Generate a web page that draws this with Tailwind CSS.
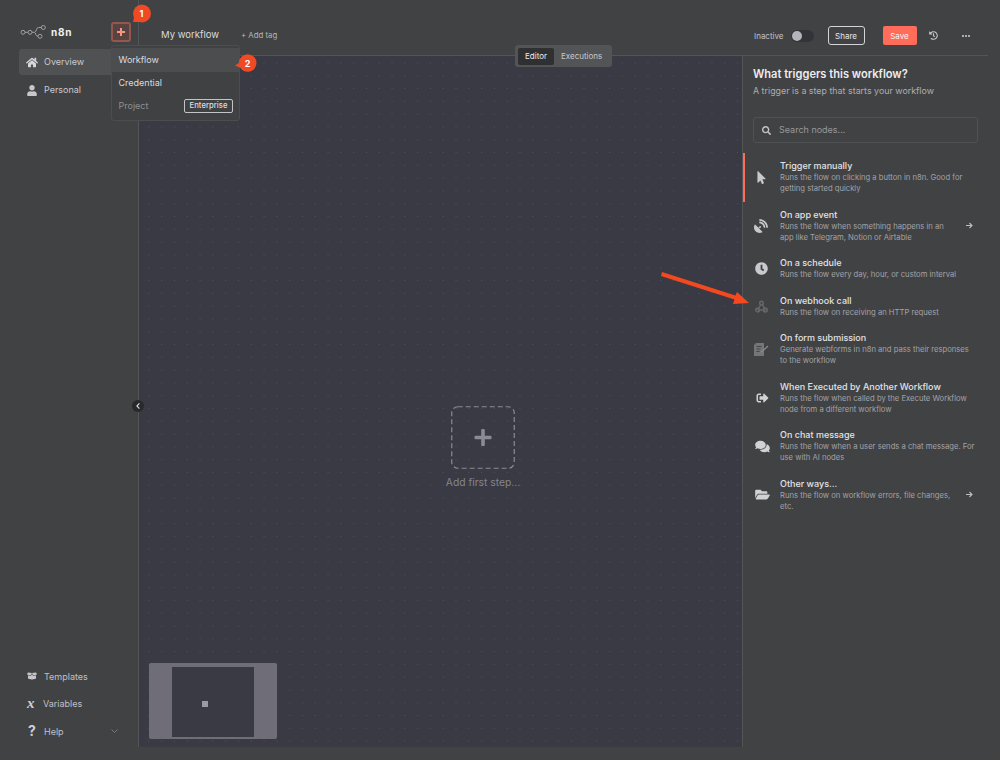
<!DOCTYPE html>
<html lang="en">
<head>
    <meta charset="UTF-8">
    <title>My workflow - n8n</title>
    <script src="https://cdn.jsdelivr.net/npm/@tailwindcss/browser@4"></script>
</head>
<body class="bg-[#414244] font-[Inter,sans-serif] overflow-hidden">
    <div class="relative w-[1000px] h-[760px] flex pb-[13px] pr-[12px] overflow-hidden">

        <!-- Sidebar -->
        <aside class="w-[139px] shrink-0 border-r border-[#535456] flex flex-col">
            <div class="h-[49px] pl-[20px] pt-[24px] flex items-start gap-[5px]">
                <svg class="w-[26px] h-[16px]" viewBox="0 0 26 16" fill="none" stroke="#a0a0a4" stroke-width="1">
                    <circle cx="3" cy="8.300" r="2"/><circle cx="10" cy="8.300" r="2"/><circle cx="20" cy="12.300" r="2"/><circle cx="23.300" cy="3.500" r="2"/>
                    <path d="M5 8.300h3M12 8.300h2.500M14.500 8.300c2 0 1.500-4.800 4-4.800h2.800M14.500 8.300c1.500 0 .5 4 3.500 4"/>
                </svg>
                <span class="text-[10px] leading-[16px] font-bold tracking-[0.8px] text-[#f0f0f0]">n8n</span>
            </div>
            <nav class="flex flex-col pl-[19px] text-[9px] text-[#c9c9cd]">
                <a class="h-[26px] bg-[#505153] rounded-l-[3px] flex items-center pl-[7px] gap-[6px]">
                    <svg class="w-[12px] h-[11px]" viewBox="0 0 576 512" fill="#d6d6da"><path d="M280.37 148.26L96 300.11V464a16 16 0 0 0 16 16l112.06-.29a16 16 0 0 0 15.92-16V368a16 16 0 0 1 16-16h64a16 16 0 0 1 16 16v95.64a16 16 0 0 0 16 16.05L464 480a16 16 0 0 0 16-16V300L295.67 148.26a12.19 12.19 0 0 0-15.3 0zM571.6 251.47L488 182.56V44.05a12 12 0 0 0-12-12h-56a12 12 0 0 0-12 12v72.61L318.47 43a48 48 0 0 0-61 0L4.34 251.47a12 12 0 0 0-1.6 16.9l25.5 31A12 12 0 0 0 45.15 301l235.22-193.74a12.19 12.19 0 0 1 15.3 0L530.9 301a12 12 0 0 0 16.9-1.6l25.5-31a12 12 0 0 0-1.7-16.93z"/></svg>
                    <span>Overview</span>
                </a>
                <a class="h-[28px] mt-[1px] flex items-center pl-[8px] gap-[7px]">
                    <svg class="w-[10px] h-[11px]" viewBox="0 0 448 512" fill="#c6c6cc"><path d="M224 256c70.7 0 128-57.3 128-128S294.7 0 224 0 96 57.3 96 128s57.3 128 128 128zm89.6 32h-16.7c-22.2 10.2-46.9 16-72.9 16s-50.6-5.8-72.9-16h-16.7C60.2 288 0 348.2 0 422.4V464c0 26.5 21.5 48 48 48h352c26.5 0 48-21.5 48-48v-41.6c0-74.2-60.2-134.4-134.4-134.4z"/></svg>
                    <span>Personal</span>
                </a>
            </nav>
            <nav class="mt-auto pb-[2px] flex flex-col pl-[27px] text-[9px] text-[#c0c0c4]">
                <a class="h-[27.5px] flex items-center gap-[7px]">
                    <svg class="w-[10px] h-[8px]" viewBox="0 0 640 512" fill="#c6c6cc"><path d="M425.7 256c-16.9 0-32.8-9-41.4-23.4L320 126l-64.2 106.6c-8.7 14.5-24.6 23.5-41.5 23.5-4.5 0-9-.6-13.3-1.9L64 215v178c0 14.7 10 27.5 24.2 31l216.2 54.1c10.2 2.5 20.9 2.5 31 0L551.8 424c14.2-3.6 24.2-16.4 24.2-31V215l-137 39.1c-4.3 1.3-8.8 1.9-13.3 1.9zm212.6-112.2L586.8 41c-3.1-6.2-9.8-9.8-16.7-8.9L320 64l91.7 152.1c3.8 6.3 11.4 9.3 18.5 7.3l197.9-56.5c9.9-2.9 14.7-13.9 10.2-23.1zM53.2 41L1.7 143.8c-4.6 9.2.3 20.2 10.1 23l197.9 56.5c7.1 2 14.7-1 18.5-7.3L320 64 69.8 32.1c-6.9-.8-13.5 2.7-16.6 8.9z"/></svg>
                    <span>Templates</span>
                </a>
                <a class="h-[27.5px] flex items-center gap-[6px]">
                    <span class="w-[10px] text-[15px] leading-none font-bold italic font-[Liberation_Serif,serif] text-[#d0d0d4]">x</span>
                    <span>Variables</span>
                </a>
                <a class="h-[27.5px] flex items-center gap-[7px]">
                    <span class="w-[10px] text-[14px] leading-none font-bold text-center text-[#d0d0d4]">?</span>
                    <span>Help</span>
                    <svg class="w-[7px] h-[4px] ml-[40px]" viewBox="0 0 7 4" fill="none" stroke="#85868a" stroke-width="0.8"><path d="M.5.5l3 3 3-3"/></svg>
                </a>
            </nav>
        </aside>

        <!-- Main column -->
        <div class="flex-1 flex flex-col min-w-0">
            <header class="h-[56px] shrink-0 border-b border-[#535456] flex items-center pl-[22px] pr-[18px] pt-[16px]">
                <span class="text-[9.5px] text-[#dcdcdf]">My workflow</span>
                <span class="ml-[22px] text-[7.8px] text-[#b6b6ba]">+ Add tag</span>
                <span class="ml-auto text-[8px] text-[#c0c0c4]">Inactive</span>
                <span class="ml-[7px] w-[23px] h-[12px] rounded-full bg-[#333437] flex items-center pl-[1px]"><span class="w-[10px] h-[10px] rounded-full bg-[#b4b4ba]"></span></span>
                <button class="ml-[14px] w-[37px] h-[19px] rounded-[3px] border border-[#d4d4d8] text-[8px] text-[#e6e6e8]">Share</button>
                <button class="ml-[18px] w-[34px] h-[19px] rounded-[2px] bg-[#ff6d5a] text-[8px] text-[#f4f4f4]">Save</button>
                <svg class="ml-[12.500px] w-[9px] h-[9px]" viewBox="0 0 512 512" fill="#c4c4c8"><path d="M504 255.531c.253 136.64-111.18 248.372-247.82 248.468-59.015.042-113.223-20.53-155.822-54.911-11.077-8.94-11.905-25.541-1.839-35.607l11.267-11.267c8.609-8.609 22.353-9.551 31.891-1.984C173.062 425.135 212.781 440 256 440c101.705 0 184-82.311 184-184 0-101.705-82.311-184-184-184-48.814 0-93.149 18.969-126.068 49.932l50.754 50.754c10.08 10.08 2.941 27.314-11.313 27.314H24c-8.837 0-16-7.163-16-16V38.627c0-14.254 17.234-21.393 27.314-11.314l49.372 49.372C129.209 34.136 189.552 8 256 8c136.81 0 247.747 110.78 248 247.531zm-180.912 78.784l9.823-12.63c8.138-10.463 6.253-25.542-4.21-33.679L288 256.349V152c0-13.255-10.745-24-24-24h-16c-13.255 0-24 10.745-24 24v135.651l65.409 50.874c10.463 8.137 25.541 6.253 33.679-4.21z"/></svg>
                <span class="ml-[24px] flex gap-[1px]"><i class="w-[2px] h-[2px] rounded-full bg-[#d0d0d4]"></i><i class="w-[2px] h-[2px] rounded-full bg-[#d0d0d4]"></i><i class="w-[2px] h-[2px] rounded-full bg-[#d0d0d4]"></i></span>
            </header>

            <div class="flex-1 flex min-h-0">
                <!-- Canvas -->
                <main class="relative flex-1 bg-[#393a43] bg-[radial-gradient(circle,#52535b_0.6px,transparent_0.8px)] bg-[size:12.8px_12.8px] bg-[position:3.5px_0.5px]">
                    <div class="absolute left-[312px] top-[350px] flex flex-col items-center w-[64px]">
                        <svg class="w-[64px] h-[63px]" viewBox="0 0 64 63" fill="none">
                            <rect x=".75" y=".75" width="62.500" height="61.500" rx="6" stroke="#8b8b95" stroke-width="1.200" stroke-dasharray="5 3"/>
                            <rect x="30.200" y="23" width="3.600" height="17" rx="1" fill="#8b8b95"/>
                            <rect x="23.500" y="29.700" width="17" height="3.600" rx="1" fill="#8b8b95"/>
                        </svg>
                        <span class="mt-[6px] whitespace-nowrap text-[10.3px] text-[#85858f]">Add first step...</span>
                    </div>
                    <div class="absolute left-[10px] bottom-[8px] w-[128px] h-[76px] rounded-[2px] bg-[#6f6e78] flex justify-center pt-[4px]">
                        <div class="w-[82px] h-[70px] bg-[#393a43] pl-[30px] pt-[34px]">
                            <span class="block w-[6px] h-[6px] bg-[#9a9aa2]"></span>
                        </div>
                    </div>
                </main>

                <!-- Trigger panel -->
                <section class="w-[246px] shrink-0 border-l border-[#535456]">
                    <div class="pl-[10px] pr-[10px] pt-[11px]">
                        <h2 class="text-[11.1px] leading-[14px] font-semibold text-[#ededf0]">What triggers this workflow?</h2>
                        <p class="mt-[3.500px] text-[8.9px] leading-[12px] text-[#aeaeb3]">A trigger is a step that starts your workflow</p>
                        <div class="mt-[20.500px] h-[26px] rounded-[3px] border border-[#505154] flex items-center pl-[8px] gap-[8px]">
                            <svg class="w-[9px] h-[9px]" viewBox="0 0 512 512" fill="#c4c4c8"><path d="M505 442.7L405.3 343c-4.5-4.5-10.6-7-17-7H372c27.6-35.3 44-79.7 44-128C416 93.1 322.9 0 208 0S0 93.1 0 208s93.1 208 208 208c48.3 0 92.7-16.4 128-44v16.3c0 6.4 2.5 12.5 7 17l99.7 99.7c9.4 9.4 24.6 9.4 33.9 0l28.3-28.3c9.4-9.4 9.4-24.6.1-34zM208 336c-70.7 0-128-57.2-128-128 0-70.7 57.2-128 128-128 70.7 0 128 57.2 128 128 0 70.7-57.2 128-128 128z"/></svg>
                            <span class="text-[9px] text-[#98989d]">Search nodes...</span>
                        </div>
                    </div>

                    <ul class="mt-[10px]">
                        <li class="border-l-2 border-[#ff6d5a] h-[48.5px] pl-[11.5px] pr-[8px] flex items-center">
                            <div class="w-[23.5px] shrink-0"><svg class="w-[9px] h-[13px]" viewBox="0 0 320 512" fill="#c8c8cd"><path d="M302.189 329.126H196.105l55.831 135.993c3.889 9.428-.555 19.999-9.444 23.999l-49.165 21.427c-9.165 4-19.443-.571-23.332-9.714l-53.053-129.136-86.664 89.138C18.729 472.71 0 463.554 0 447.977V18.299C0 1.899 19.921-6.096 30.277 5.443l284.412 292.542c11.472 11.179 3.007 31.141-12.5 31.141z"/></svg></div>
                            <div><h3 class="text-[9px] leading-[11px] font-medium text-[#e2e2e5]">Trigger manually</h3><p class="mt-[1px] text-[7.65px] leading-[11px] text-[#a2a2a7]">Runs the flow on clicking a button in n8n. Good for getting started quickly</p></div>
                        </li>
                        <li class="h-[48.5px] pl-[13.5px] pr-[15px] flex items-center">
                            <div class="w-[23.5px] shrink-0"><svg class="w-[14px] h-[14px] -ml-[2.5px]" viewBox="0 0 512 512" fill="#c8c8cd"><path d="M305.44954,462.59c7.39157,7.29792,6.18829,20.09661-3.00038,25.00356-77.713,41.80281-176.72559,29.9105-242.34331-35.7082C-5.49624,386.28227-17.404,287.362,24.41381,209.554c4.89125-9.095,17.68975-10.29834,25.00318-3.00043L166.22872,323.36708l27.39411-27.39452c-.68759-2.60974-1.594-5.00071-1.594-7.81361a32.00407,32.00407,0,1,1,32.00407,32.00455c-2.79723,0-5.20378-.89075-7.79786-1.594l-27.40974,27.41015ZM511.9758,303.06732a16.10336,16.10336,0,0,1-16.002,17.00242H463.86031a15.96956,15.96956,0,0,1-15.89265-14.70543C440.46671,175.5492,336.45348,70.53427,207.03078,63.948a16.09436,16.09436,0,0,1-15.00191-15.90852V16.02652A16.09389,16.09389,0,0,1,209.031.02425C372.25,8.61922,503.47,139.841,511.9758,303.06732Zm-96.01221-.29689a16.21093,16.21093,0,0,1-16.11142,17.29934H367.645a16.06862,16.06862,0,0,1-15.89265-14.00212c-6.90712-77.70094-68.29305-139.5-145.9219-146.18819a16.049,16.049,0,0,1-14.00223-15.89307V112.04878a16.167,16.167,0,0,1,17.29-16.10549C319.8728,103.22664,408.2718,191.6197,415.96359,302.77043Z"/></svg></div>
                            <div class="w-[172px] shrink-0"><h3 class="text-[9px] leading-[11px] font-medium text-[#e2e2e5]">On app event</h3><p class="mt-[1px] text-[7.65px] leading-[11px] text-[#a2a2a7]">Runs the flow when something happens in an app like Telegram, Notion or Airtable</p></div>
                            <svg class="w-[7px] h-[7px] ml-auto" viewBox="0 0 7 7" fill="none" stroke="#bdbdc2" stroke-width="1.100"><path d="M0 3.5h6M3.5 1l2.500 2.500L3.500 6"/></svg>
                        </li>
                        <li class="h-[37.5px] pl-[13.5px] pr-[8px] flex items-center">
                            <div class="w-[23.5px] shrink-0"><svg class="w-[13px] h-[13px] -ml-[1.5px]" viewBox="0 0 512 512" fill="#c8c8cd"><path d="M256 8C119 8 8 119 8 256s111 248 248 248 248-111 248-248S393 8 256 8zm57.1 350.1L224.9 294c-3.1-2.3-4.9-5.9-4.9-9.7V116c0-6.6 5.4-12 12-12h48c6.6 0 12 5.4 12 12v137.7l63.5 46.2c5.4 3.9 6.5 11.4 2.6 16.8l-28.2 38.8c-3.9 5.3-11.4 6.5-16.8 2.6z"/></svg></div>
                            <div><h3 class="text-[9px] leading-[11px] font-medium text-[#e2e2e5]">On a schedule</h3><p class="mt-[1px] text-[7.65px] leading-[11px] text-[#a2a2a7]">Runs the flow every day, hour, or custom interval</p></div>
                        </li>
                        <li class="h-[37.5px] pl-[13.5px] pr-[8px] flex items-center">
                            <div class="w-[23.5px] shrink-0"><svg class="w-[13px] h-[13px] -ml-[1.5px]" viewBox="0 0 13 13" fill="none" stroke="#66676b" stroke-width="1.500"><circle cx="6.500" cy="3" r="1.800"/><circle cx="2.700" cy="10" r="1.900"/><circle cx="10.300" cy="10" r="1.900"/><path d="M5.500 5L2.700 10M7.500 4.600L10.300 10M2.700 10h7.600"/></svg></div>
                            <div><h3 class="text-[9px] leading-[11px] font-medium text-[#e2e2e5]">On webhook call</h3><p class="mt-[1px] text-[7.65px] leading-[11px] text-[#a2a2a7]">Runs the flow on receiving an HTTP request</p></div>
                        </li>
                        <li class="h-[48.5px] pl-[13.5px] pr-[8px] flex items-center">
                            <div class="w-[23.5px] shrink-0"><svg class="w-[15px] h-[14px] -ml-[2.5px]" viewBox="0 0 15 14"><path d="M0 2.5h1.500V1h8.500v13H0z" fill="#75767a"/><path d="M2.500 4.500h5M2.500 7h4M2.500 9.500h3" stroke="#414244" stroke-width="1"/><path d="M7 10.500L14 4" stroke="#8a8b8f" stroke-width="1.200"/></svg></div>
                            <div class="w-[196px] shrink-0"><h3 class="text-[9px] leading-[11px] font-medium text-[#e2e2e5]">On form submission</h3><p class="mt-[1px] text-[7.65px] leading-[11px] text-[#a2a2a7]">Generate webforms in n8n and pass their responses to the workflow</p></div>
                        </li>
                        <li class="h-[48.5px] pl-[13.5px] pr-[8px] flex items-center">
                            <div class="w-[23.5px] shrink-0"><svg class="w-[13px] h-[12px] -ml-[1px]" viewBox="0 0 512 512" fill="#d2d2d6"><path d="M497 273L329 441c-15 15-41 4.5-41-17v-96H152c-13.3 0-24-10.7-24-24v-96c0-13.3 10.7-24 24-24h136V88c0-21.4 25.9-32 41-17l168 168c9.3 9.4 9.3 24.6 0 34zM192 436v-40c0-6.6-5.4-12-12-12H96c-17.7 0-32-14.3-32-32V160c0-17.7 14.3-32 32-32h84c6.6 0 12-5.4 12-12V76c0-6.6-5.4-12-12-12H96c-53 0-96 43-96 96v192c0 53 43 96 96 96h84c6.6 0 12-5.4 12-12z"/></svg></div>
                            <div><h3 class="text-[9px] leading-[11px] font-medium text-[#e2e2e5]">When Executed by Another Workflow</h3><p class="mt-[1px] text-[7.65px] leading-[11px] text-[#a2a2a7]">Runs the flow when called by the Execute Workflow node from a different workflow</p></div>
                        </li>
                        <li class="h-[48.5px] pl-[13.5px] pr-[8px] flex items-center">
                            <div class="w-[23.5px] shrink-0"><svg class="w-[15px] h-[13px] -ml-[2px]" viewBox="0 0 576 512" fill="#d2d2d6"><path d="M416 192c0-88.4-93.1-160-208-160S0 103.6 0 192c0 34.3 14.1 65.9 38 92-13.4 30.2-35.5 54.2-35.8 54.5-2.2 2.3-2.8 5.7-1.5 8.7S4.8 352 8 352c36.6 0 66.9-12.3 88.7-25 32.2 15.7 70.3 25 111.3 25 114.9 0 208-71.6 208-160zm122 220c23.9-26 38-57.7 38-92 0-66.9-53.5-124.2-129.3-148.1.9 6.6 1.3 13.3 1.3 20.1 0 105.9-107.7 192-240 192-10.8 0-21.3-.8-31.7-1.9C207.8 439.6 281.8 480 368 480c41 0 79.1-9.2 111.3-25 21.8 12.7 52.1 25 88.7 25 3.2 0 6.1-1.9 7.3-4.8 1.3-2.9.7-6.3-1.5-8.7-.3-.3-22.4-24.2-35.8-54.5z"/></svg></div>
                            <div><h3 class="text-[9px] leading-[11px] font-medium text-[#e2e2e5]">On chat message</h3><p class="mt-[1px] text-[7.65px] leading-[11px] text-[#a2a2a7]">Runs the flow when a user sends a chat message. For use with AI nodes</p></div>
                        </li>
                        <li class="h-[48.5px] pl-[13.5px] pr-[15px] flex items-center">
                            <div class="w-[23.5px] shrink-0"><svg class="w-[15px] h-[13px] -ml-[2px]" viewBox="0 0 576 512" fill="#d2d2d6"><path d="M572.694 292.093L500.27 416.248A63.997 63.997 0 0 1 444.989 448H45.025c-18.523 0-30.064-20.093-20.731-36.093l72.424-124.155A64 64 0 0 1 152 256h399.964c18.523 0 30.064 20.093 20.73 36.093zM152 224h328v-48c0-26.51-21.49-48-48-48H272l-64-64H48C21.49 64 0 85.49 0 112v278.046l69.077-118.418C86.214 242.25 117.989 224 152 224z"/></svg></div>
                            <div class="w-[172px] shrink-0"><h3 class="text-[9px] leading-[11px] font-medium text-[#e2e2e5]">Other ways...</h3><p class="mt-[1px] text-[7.65px] leading-[11px] text-[#a2a2a7]">Runs the flow on workflow errors, file changes, etc.</p></div>
                            <svg class="w-[7px] h-[7px] ml-auto" viewBox="0 0 7 7" fill="none" stroke="#bdbdc2" stroke-width="1.100"><path d="M0 3.5h6M3.5 1l2.500 2.500L3.500 6"/></svg>
                        </li>
                    </ul>
                </section>
            </div>
        </div>

        <!-- Overlays -->
        <button class="absolute left-[111px] top-[22px] w-[20px] h-[20px] rounded-[3px] bg-[#574341] border-2 border-[#94564d] flex items-center justify-center">
            <svg class="w-[8px] h-[8px]" viewBox="0 0 8 8" fill="#f8937f"><rect x="3" width="2" height="8"/><rect y="3" width="8" height="2"/></svg>
        </button>

        <div class="absolute left-[111px] top-[45px] w-[129px] h-[76px] rounded-[3px] bg-[#404143] border border-[#4c4d4f] pt-[2px] text-[9px] text-[#dcdcdf]">
            <div class="h-[23.5px] bg-[#4c4d4f] flex items-center pl-[6.500px]">Workflow</div>
            <div class="h-[23px] flex items-center pl-[6.500px]">Credential</div>
            <div class="h-[23px] flex items-center pl-[6.500px] pr-[6px] justify-between text-[#8f8f94]">
                <span>Project</span>
                <span class="w-[49px] h-[14px] rounded-[2px] border border-[#c4c4c8] flex items-center justify-center text-[7.7px] font-medium text-[#dedee0]">Enterprise</span>
            </div>
        </div>

        <div class="absolute left-[515px] top-[45px] w-[97px] h-[22px] rounded-[3px] bg-[#535456] flex items-center pl-[3px] text-[8px]">
            <span class="w-[36px] h-[17px] rounded-[2px] bg-[#2f3032] text-[#ededf0] flex items-center justify-center">Editor</span>
            <span class="ml-[7px] text-[#c8c8cc]">Executions</span>
        </div>

        <button class="absolute left-[132px] top-[400px] w-[12px] h-[12px] rounded-full bg-[#28292b] flex items-center justify-center">
            <svg class="w-[4px] h-[6px]" viewBox="0 0 4 6" fill="none" stroke="#e2e2e6" stroke-width="1.100"><path d="M3.400.4L.9 3l2.500 2.600"/></svg>
        </button>

        <svg class="absolute left-[125px] top-[0px] w-[135px] h-[76px]" viewBox="0 0 135 76" fill="#ef4a24">
            <circle cx="17" cy="13.500" r="9"/>
            <path d="M8 22l2-9 6 9z"/>
            <circle cx="122.700" cy="63" r="8.800"/>
            <path d="M110 65.500l12-8 2 14z"/>
        </svg>
        <span class="absolute left-[137.500px] top-[6.500px] w-[8px] text-center text-[9px] leading-[13px] font-bold text-white">1</span>
        <span class="absolute left-[243.500px] top-[56.500px] w-[8px] text-center text-[9px] leading-[13px] font-bold text-white">2</span>

        <svg class="absolute left-[655px] top-[268px] w-[100px] h-[44px]" viewBox="0 0 100 44" fill="#f4491f">
            <path d="M7 4L80.500 27.500 82 24 94 35 78 36 79.500 31.500 6 8z"/>
        </svg>
    </div>
</body>
</html>
